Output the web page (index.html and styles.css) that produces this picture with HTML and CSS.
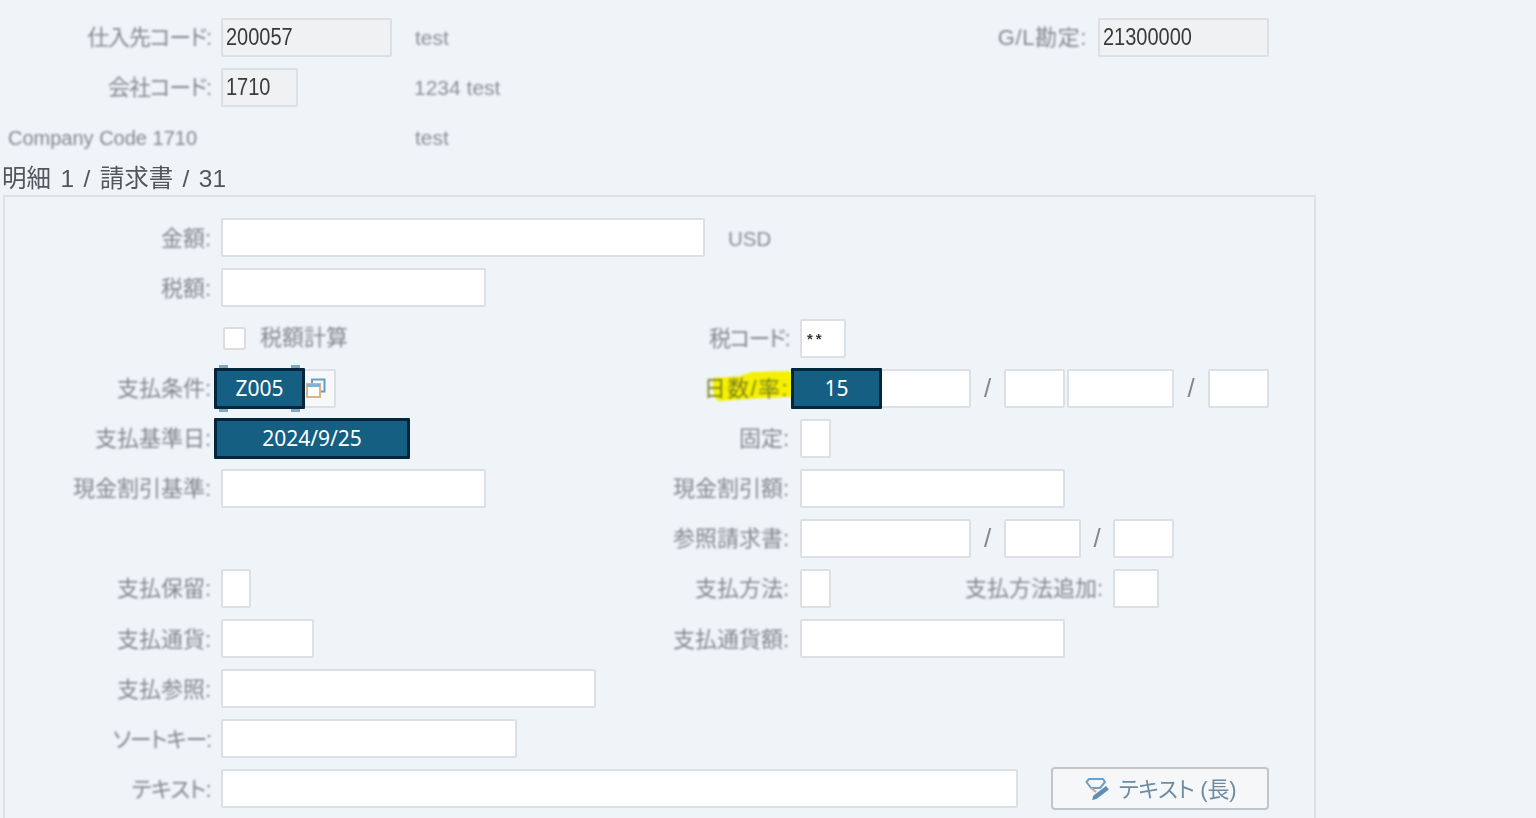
FILE: index.html
```html
<!DOCTYPE html>
<html lang="ja">
<head>
<meta charset="utf-8">
<title>明細</title>
<link rel="stylesheet" href="styles.css">
</head>
<body>
<div class="page">
  <section class="head">
    <div class="row top">
      <div class="lab k12">仕入先コード:</div>
      <div class="cell"><span class="fld ro w171"><span class="val">200057</span></span><span class="desc">test</span></div>
      <div></div>
      <div class="cell"><div class="lab gl">G/L勘定:</div><span class="fld ro w171"><span class="val">21300000</span></span></div>
    </div>
    <div class="row top">
      <div class="lab k12">会社コード:</div>
      <div class="cell"><span class="fld ro w77"><span class="val">1710</span></span><span class="desc d2">1234 test</span></div>
    </div>
    <div class="row top">
      <div class="lab co">Company Code 1710</div>
      <div class="cell"><span class="desc d3">test</span></div>
    </div>
  </section>
  <h2 class="title">明細 1 / 請求書 / 31</h2>
  <section class="box">
    <div class="row">
      <div class="lab">金額:</div>
      <div class="cell wide"><span class="fld w484"></span><span class="unit">USD</span></div>
    </div>
    <div class="row">
      <div class="lab">税額:</div>
      <div class="cell"><span class="fld w265"></span></div>
    </div>
    <div class="row">
      <div class="lab"></div>
      <div class="cell"><span class="check"></span><span class="lab inline">税額計算</span></div>
      <div class="lab b k16">税コード:</div>
      <div class="cell"><span class="fld w46"><span class="val small">**</span></span></div>
    </div>
    <div class="row">
      <div class="lab">支払条件:</div>
      <div class="cell">
        <span class="fld w115 combo">
          <span class="hint h1"></span><span class="hint h2"></span>
          <span class="f4">
            <svg class="ico" width="24" height="24" viewBox="0 0 24 24" aria-hidden="true">
              <path d="M8 8V3.500h12.500v12H16" fill="none" stroke="#5f9fc8" stroke-width="2"/>
              <rect x="3" y="8" width="13" height="13" fill="#fff" stroke="#d8b48c" stroke-width="2"/>
              <path d="M3 8h13v3H3z" fill="#7fb2d4"/>
            </svg>
          </span>
          <span class="mark m1">Z005</span>
        </span>
      </div>
      <div class="lab b hlwrap"><span class="hl"></span><span class="hltext">日数/率:</span></div>
      <div class="cell">
        <span class="fld w171"><span class="mark m2">15</span></span>
        <span class="sl s1">/</span>
        <span class="fld w61"></span>
        <span class="fld w107 g2"></span>
        <span class="sl s2">/</span>
        <span class="fld w61"></span>
      </div>
    </div>
    <div class="row">
      <div class="lab">支払基準日:</div>
      <div class="cell"><span class="fld w171"><span class="mark m3">2024/9/25</span></span></div>
      <div class="lab b">固定:</div>
      <div class="cell"><span class="fld w31"></span></div>
    </div>
    <div class="row">
      <div class="lab">現金割引基準:</div>
      <div class="cell"><span class="fld w265"></span></div>
      <div class="lab b">現金割引額:</div>
      <div class="cell"><span class="fld w265"></span></div>
    </div>
    <div class="row">
      <div class="lab"></div>
      <div class="cell"></div>
      <div class="lab b">参照請求書:</div>
      <div class="cell">
        <span class="fld w171"></span>
        <span class="sl s1">/</span>
        <span class="fld w77"></span>
        <span class="sl s3">/</span>
        <span class="fld w61"></span>
      </div>
    </div>
    <div class="row">
      <div class="lab">支払保留:</div>
      <div class="cell"><span class="fld w30"></span></div>
      <div class="lab b">支払方法:</div>
      <div class="cell">
        <span class="fld w31"></span>
        <span class="lab addl">支払方法追加:</span>
        <span class="fld w46"></span>
      </div>
    </div>
    <div class="row">
      <div class="lab">支払通貨:</div>
      <div class="cell"><span class="fld w93"></span></div>
      <div class="lab b">支払通貨額:</div>
      <div class="cell"><span class="fld w265"></span></div>
    </div>
    <div class="row">
      <div class="lab">支払参照:</div>
      <div class="cell wide"><span class="fld w375"></span></div>
    </div>
    <div class="row">
      <div class="lab k12">ソートキー:</div>
      <div class="cell wide"><span class="fld w296"></span></div>
    </div>
    <div class="row">
      <div class="lab k08">テキスト:</div>
      <div class="cell wide">
        <span class="fld w797"></span>
        <button class="btn" type="button">
          <svg class="pen" width="26" height="26" viewBox="0 0 26 26" aria-hidden="true">
            <path d="M2.500 6 5 3h14l2 3-5 6H7z" fill="none" stroke="#6f9ec4" stroke-width="2" stroke-linejoin="round"/>
            <path d="M7 12l5 4" fill="none" stroke="#c9a896" stroke-width="2"/>
            <path d="M8 24l1.500-4.500L22 10l3 3.500-12.500 9.500z" fill="#5f8fb5"/>
          </svg>
          <span class="btxt">テキスト (長)</span>
        </button>
      </div>
    </div>
  </section>
</div>
</body>
</html>
```
FILE: styles.css
```css
* { box-sizing: border-box; }
html, body { margin: 0; height: 818px; overflow: hidden; background: #eff4f9; }
body { font-family: "Liberation Sans", "Noto Sans CJK JP", sans-serif; }
.page { padding-top: 12px; height: 818px; overflow: hidden; }

.row {
  display: grid;
  grid-template-columns: 216px 357px 222px 1fr;
  height: 50.1px;
  align-items: center;
}
.top { grid-template-columns: 221px 357px 222px 1fr; }
.cell { display: flex; align-items: center; min-width: 0; }
.wide { grid-column: 2 / -1; }

.lab {
  font-size: 22px;
  color: #83888d;
  text-align: right;
  padding-right: 10px;
  padding-bottom: 4px;
  white-space: nowrap;
  font-feature-settings: "palt";
  filter: blur(.8px);
}
.k08 { letter-spacing: -.7px; }
.k12 { letter-spacing: -1.2px; }
.k16 { letter-spacing: -1.6px; }
.lab.b { padding-right: 11px; position: relative; }
.lab.inline { padding: 0 0 6px 14px; }
.lab.gl { width: 298px; padding-right: 11px; letter-spacing: .6px; }
.lab.co { text-align: left; padding: 2px 0 0 8px; font-size: 20px; }
.lab.addl { width: 282px; padding-right: 10px; }

.fld {
  display: flex;
  align-items: center;
  position: relative;
  height: 39px;
  background: #fff;
  border: 2px solid #dcdfe3;
  border-radius: 2px;
  flex: none;
}
.ro { background: #f0f1f3; }
.val {
  display: inline-block;
  font-size: 20px;
  color: #38393b;
  padding-left: 3px;
  transform: scaleY(1.22);
  filter: blur(.6px);
}
.small { font-size: 15px; padding-left: 5px; letter-spacing: 3px; transform: none; font-weight: 700; }

.w30 { width: 30px; } .w31 { width: 31px; } .w46 { width: 46px; }
.w61 { width: 61px; } .w77 { width: 77px; } .w93 { width: 93px; }
.w107 { width: 107px; } .w115 { width: 115px; } .w171 { width: 171px; }
.w265 { width: 265px; } .w296 { width: 296px; } .w375 { width: 375px; }
.w484 { width: 484px; } .w797 { width: 797px; }

.desc, .unit {
  font-size: 21px;
  color: #8a8f94;
  padding-top: 2px;
  filter: blur(.8px);
}
.desc { margin-left: 23px; }
.d2 { margin-left: 116px; }
.d3 { margin-left: 194px; }
.unit { margin-left: 23px; font-size: 20.500px; }

.title {
  margin: 0;
  height: 33px;
  font-size: 24.500px;
  font-weight: 400;
  line-height: 33px;
  padding-left: 2px;
  color: #53575b;
  word-spacing: 2.6px;
  font-feature-settings: "palt";
  filter: blur(.7px);
}

.box {
  margin-left: 3px;
  width: 1313px;
  height: 640px;
  border: 2px solid #dde2e7;
  padding-top: 15.500px;
}

.check {
  width: 23px;
  height: 23px;
  margin-left: 2px;
  background: #fff;
  border: 2px solid #dcdcde;
  border-radius: 3px;
}

.combo { justify-content: flex-end; }
.f4 {
  display: flex;
  align-items: center;
  justify-content: center;
  height: 100%;
  width: 40px;
  background: #f7f8f9;
}
.ico { margin-left: 3px; filter: blur(.5px); }
.hint {
  position: absolute;
  top: -6px;
  bottom: -6px;
  width: 9px;
  border-top: 3px solid #7fa8c4;
  border-bottom: 3px solid #7fa8c4;
}
.h1 { left: -4px; }
.h2 { left: 68px; }

.mark {
  position: absolute;
  top: -3px;
  height: 41px;
  display: flex;
  align-items: center;
  justify-content: center;
  background: #155f82;
  border: 3px solid #04263c;
  border-radius: 1px;
  color: #fff;
  font-family: "Noto Sans", sans-serif;
  font-size: 21px;
}
.m1 { left: -9px; width: 91px; }
.m2 { left: -11px; width: 91px; }
.m3 { left: -9px; width: 196px; }

.hlwrap { letter-spacing: 1.4px; }
.hl {
  position: absolute;
  right: 2px;
  top: 1px;
  width: 85px;
  height: 30px;
  background: #f4f000;
  clip-path: polygon(0 22%, 30% 18%, 46% 3%, 90% 0, 100% 25%, 100% 85%, 60% 90%, 5% 100%, 0 70%);
}
.hltext { position: relative; color: #7d8020; }

.sl {
  font-size: 26px;
  line-height: 1;
  color: #83888d;
  text-align: center;
  filter: blur(.6px);
}
.s1 { width: 33px; }
.s2 { width: 34px; }
.s3 { width: 32px; }
.g2 { margin-left: 2px; }

.btn {
  display: flex;
  align-items: center;
  justify-content: center;
  gap: 9px;
  width: 218px;
  height: 43px;
  margin-left: 33px;
  background: #f6f7f8;
  border: 2px solid #c2c6ca;
  border-radius: 4px;
  padding: 0;
  font: inherit;
}
.pen { filter: blur(.5px); }
.btxt {
  font-size: 22px;
  color: #6f8ba3;
  padding-bottom: 4px;
  letter-spacing: -.2px;
  font-feature-settings: "palt";
  filter: blur(.7px);
}
```
